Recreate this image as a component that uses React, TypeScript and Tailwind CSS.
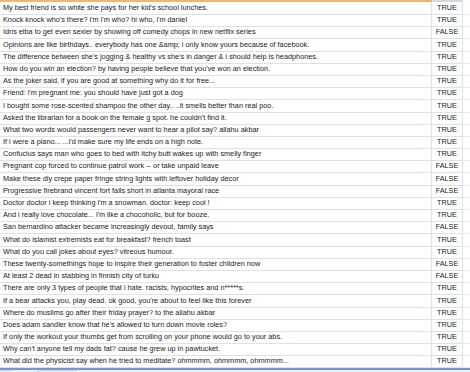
const rows: [string, boolean][] = [
  ["My best friend is so white she pays for her kid's school lunches.", true],
  ["Knock knock who's there? i'm i'm who? hi who, i'm daniel", true],
  ["Idris elba to get even sexier by showing off comedy chops in new netflix series", false],
  ["Opinions are like birthdays.. everybody has one &amp; i only know yours because of facebook.", true],
  ["The difference between she's jogging & healthy vs she's in danger & i should help is headphones.", true],
  ["How do you win an election? by having people believe that you've won an election.", true],
  ["As the joker said, if you are good at something why do it for free...", true],
  ["Friend: i'm pregnant me: you should have just got a dog", true],
  ["I bought some rose-scented shampoo the other day.. ..it smells better than real poo.", true],
  ["Asked the librarian for a book on the female g spot. he couldn't find it.", true],
  ["What two words would passengers never want to hear a pilot say? allahu akbar", true],
  ["If i were a piano... ...i'd make sure my life ends on a high note.", true],
  ["Confucius says man who goes to bed with itchy butt wakes up with smelly finger", true],
  ["Pregnant cop forced to continue patrol work -- or take unpaid leave", false],
  ["Make these diy crepe paper fringe string lights with leftover holiday decor", false],
  ["Progressive firebrand vincent fort falls short in atlanta mayoral race", false],
  ["Doctor doctor i keep thinking i'm a  snowman. doctor: keep cool !", true],
  ["And i really love chocolate... i'm like a chocoholic, but for booze.", true],
  ["San bernardino attacker became increasingly devout, family says", false],
  ["What do islamist extremists eat for breakfast? french toast", true],
  ["What do you call jokes about eyes? vitreous humour.", true],
  ["These twenty-somethings hope to inspire their generation to foster children now", false],
  ["At least 2 dead in stabbing in finnish city of turku", false],
  ["There are only 3 types of people that i hate. racists, hypocrites and n*****s.", true],
  ["If a bear attacks you, play dead. ok good, you're about to feel like this forever", true],
  ["Where do muslims go after their friday prayer? to the allahu akbar", true],
  ["Does adam sandler know that he's allowed to turn down movie roles?", true],
  ["If only the workout your thumbs get from scrolling on your phone would go to your abs.", true],
  ["Why can't anyone tell my dads fat? cause he grew up in pawtucket.", true],
  ["What did the physicist say when he tried to meditate? ohmmmm, ohmmmm, ohmmmm...", true],
];

export default function App() {
  return (
    <div
      className="w-[470px] h-[372px] overflow-hidden bg-white text-[#1a1a1a] flex flex-col"
      style={{ fontFamily: '"Liberation Sans", Arial, sans-serif' }}
    >
      <div className="grid grid-cols-[432px_31px_1fr] h-[2px]">
        <div className="bg-[#f3b46e]" />
        <div className="bg-[#d5dae2]" />
        <div />
      </div>
      {rows.map(([text, flag], i) => (
        <div key={i} className="grid grid-cols-[432px_31px_1fr] h-[12.2px]">
          <div className="border-b border-r border-[#dde2ea] pl-[3px] text-[7.3px] leading-[12px] whitespace-nowrap overflow-hidden">
            {text}
          </div>
          <div className="border-b border-r border-[#dde2ea] text-[7.3px] leading-[12px] text-center">
            {flag ? "TRUE" : "FALSE"}
          </div>
          <div className="border-b border-[#e6e9ee]" />
        </div>
      ))}
      <div className="h-[2px] bg-[#7399c6]" />
      <div className="flex-1 flex gap-[25px] bg-[#eef1f5]">
        <div className="w-[12px] bg-[#d8dde5]" />
        <div className="w-[40px] bg-[#d8dde5]" />
      </div>
    </div>
  );
}
